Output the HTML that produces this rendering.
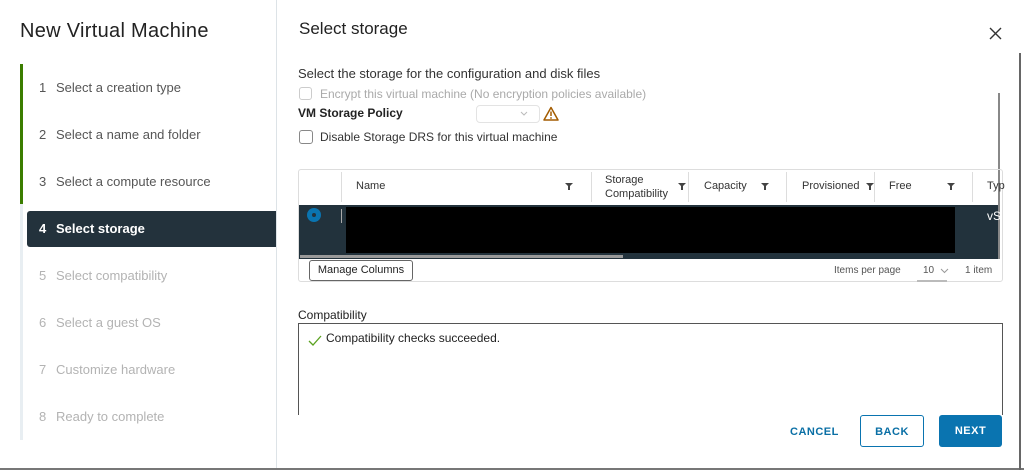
<!DOCTYPE html>
<html><head><style>
*{box-sizing:border-box;margin:0;padding:0}
body{width:1024px;height:470px;overflow:hidden;background:#fff;font-family:"Liberation Sans",sans-serif;color:#333;position:relative}
.a{position:absolute}
.step{position:absolute;left:39px;font-size:13px;color:#565656;white-space:nowrap}
.step span{display:inline-block;width:17px}
.dis{color:#b3b3b3}
.cb{position:absolute;width:13px;height:13px;border:1px solid #888;border-radius:3px;background:#fff}
.th{position:absolute;top:180px;font-size:11px;color:#333}
.flt{position:absolute;top:184px;width:8px;height:8px}
.sep{position:absolute;top:172px;width:1px;height:30px;background:#ddd}
</style></head><body>
<div class="a" style="left:20px;top:20px;font-size:20px;color:#222;letter-spacing:.3px">New Virtual Machine</div>
<div class="a" style="left:20px;top:64px;width:3px;height:140px;background:#3b7d00"></div>
<div class="a" style="left:20px;top:204px;width:3px;height:236px;background:#e8eef2"></div>
<div class="a" style="left:27px;top:211px;width:249px;height:36px;background:#23323c;border-radius:3px 0 0 3px"></div>
<div class="step" style="top:80px"><span>1</span>Select a creation type</div>
<div class="step" style="top:127px"><span>2</span>Select a name and folder</div>
<div class="step" style="top:174px"><span>3</span>Select a compute resource</div>
<div class="step" style="top:221px;color:#fff;font-weight:bold"><span>4</span>Select storage</div>
<div class="step dis" style="top:268px"><span>5</span>Select compatibility</div>
<div class="step dis" style="top:315px"><span>6</span>Select a guest OS</div>
<div class="step dis" style="top:362px"><span>7</span>Customize hardware</div>
<div class="step dis" style="top:409px"><span>8</span>Ready to complete</div>
<div class="a" style="left:276px;top:0;width:1px;height:468px;background:#dde3e7"></div>
<div class="a" style="left:0;top:468px;width:1024px;height:2px;background:#777"></div>

<div class="a" style="left:299px;top:19px;font-size:17px;color:#222">Select storage</div>
<svg class="a" style="left:989px;top:27px" width="13" height="13"><path d="M1 1L12 12M12 1L1 12" stroke="#333" stroke-width="1.4"/></svg>
<div class="a" style="left:1019px;top:53px;width:2px;height:417px;background:#666"></div>
<div class="a" style="left:998px;top:93px;width:2px;height:166px;background:#888"></div>

<div class="a" style="left:298px;top:66px;font-size:13px;color:#333">Select the storage for the configuration and disk files</div>
<div class="cb" style="left:299px;top:87px;border-color:#ccc"></div>
<div class="a" style="left:320px;top:87px;font-size:12px;color:#aaa">Encrypt this virtual machine (No encryption policies available)</div>
<div class="a" style="left:298px;top:106px;font-size:12px;font-weight:bold;color:#222">VM Storage Policy</div>
<div class="a" style="left:476px;top:105px;width:64px;height:18px;border:1px solid #e3e3e3;border-radius:4px"></div>
<svg class="a" style="left:520px;top:111px" width="8" height="5"><path d="M1 1l3 3 3-3" fill="none" stroke="#bbb"/></svg>
<svg class="a" style="left:543px;top:106px" width="16" height="15" viewBox="0 0 16 15"><path d="M8 1.5L15 14H1Z" fill="none" stroke="#a35c00" stroke-width="1.5" stroke-linejoin="round"/><path d="M8 5.5v4.5" stroke="#a35c00" stroke-width="1.5"/><circle cx="8" cy="12" r=".9" fill="#a35c00"/></svg>
<div class="cb" style="left:299px;top:130px;width:14px;height:14px"></div>
<div class="a" style="left:320px;top:130px;font-size:12px;color:#333">Disable Storage DRS for this virtual machine</div>

<div class="a" style="left:298px;top:169px;width:705px;height:113px;border:1px solid #ddd;border-radius:3px"></div>
<div class="sep" style="left:341px"></div>
<div class="sep" style="left:591px"></div>
<div class="sep" style="left:688px"></div>
<div class="sep" style="left:786px"></div>
<div class="sep" style="left:874px"></div>
<div class="sep" style="left:972px"></div>
<div class="th" style="left:356px">Name</div>
<div class="th" style="left:605px;top:173px;line-height:14px">Storage<br>Compatibility</div>
<div class="th" style="left:704px">Capacity</div>
<div class="th" style="left:802px">Provisioned</div>
<div class="th" style="left:889px">Free</div>
<div class="th" style="left:987px">Typ</div>
<svg class="a" style="left:0;top:0" width="1024" height="200"><g fill="#444"><path d="M565 183h8l-3 3v4h-2v-4z"/><path d="M678 183h8l-3 3v4h-2v-4z"/><path d="M761 183h8l-3 3v4h-2v-4z"/><path d="M866 183h8l-3 3v4h-2v-4z"/><path d="M947 183h8l-3 3v4h-2v-4z"/></g></svg>
<div class="a" style="left:299px;top:205px;width:699px;height:54px;background:#22323c"></div>
<div class="a" style="left:346px;top:207px;width:609px;height:46px;background:#000"></div>
<div class="a" style="left:307px;top:208px;width:14px;height:14px;border-radius:50%;background:#0a74b0"></div>
<div class="a" style="left:312px;top:213px;width:4px;height:4px;border-radius:50%;background:#22323c"></div>
<div class="a" style="left:341px;top:209px;width:1px;height:14px;background:#aaa"></div>
<div class="a" style="left:987px;top:209px;color:#fff;font-size:12px">vS</div>
<div class="a" style="left:300px;top:255px;width:323px;height:3px;background:#999"></div>
<div class="a" style="left:309px;top:260px;width:104px;height:21px;border:1px solid #666;border-radius:3px;font-size:11px;color:#222;text-align:center;line-height:19px">Manage Columns</div>
<div class="a" style="left:834px;top:265px;font-size:10px;color:#555">Items per page</div>
<div class="a" style="left:923px;top:265px;font-size:10px;color:#555">10</div>
<svg class="a" style="left:940px;top:268px" width="9" height="6"><path d="M1 1l3.5 3.5L8 1" fill="none" stroke="#999"/></svg>
<div class="a" style="left:917px;top:280px;width:30px;height:2px;background:#bbb"></div>
<div class="a" style="left:965px;top:265px;font-size:10px;color:#555">1 item</div>

<div class="a" style="left:298px;top:308px;font-size:12px;color:#222">Compatibility</div>
<div class="a" style="left:298px;top:323px;width:705px;height:92px;border:1px solid #555;border-bottom:none"></div>
<svg class="a" style="left:308px;top:334px" width="14" height="12"><path d="M1 7l4 4L13 2" fill="none" stroke="#5aa220" stroke-width="1.3"/></svg>
<div class="a" style="left:326px;top:331px;font-size:12px;color:#222">Compatibility checks succeeded.</div>

<div class="a" style="left:790px;top:426px;font-size:11px;font-weight:bold;color:#0a6fa5;letter-spacing:.5px">CANCEL</div>
<div class="a" style="left:860px;top:415px;width:64px;height:32px;border:1px solid #0a74b0;border-radius:3px;font-size:11px;font-weight:bold;color:#0a6fa5;text-align:center;line-height:32px;letter-spacing:.5px">BACK</div>
<div class="a" style="left:939px;top:415px;width:63px;height:32px;background:#0a74b0;border-radius:3px;font-size:11px;font-weight:bold;color:#fff;text-align:center;line-height:33px;letter-spacing:.5px">NEXT</div>
</body></html>
